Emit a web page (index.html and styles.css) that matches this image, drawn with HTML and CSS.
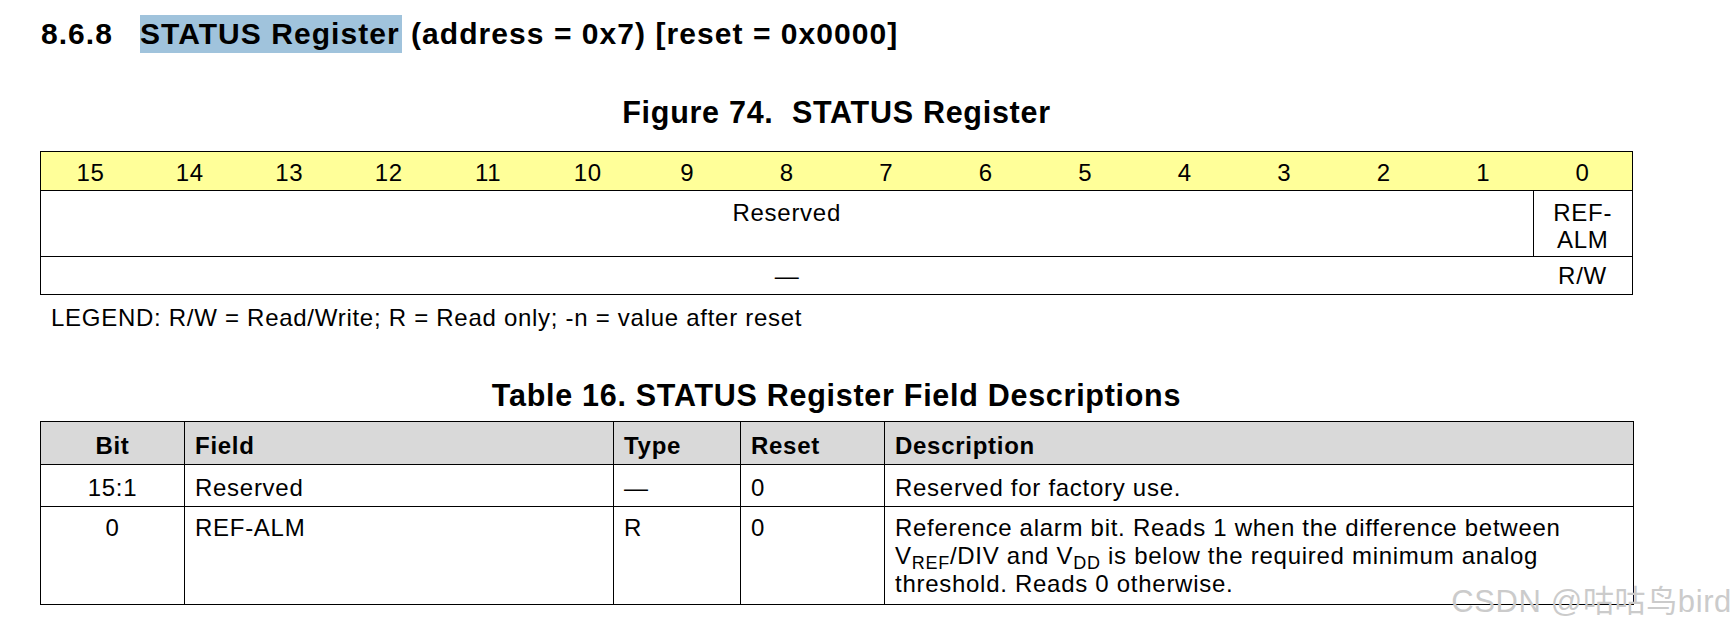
FILE: index.html
```html
<!DOCTYPE html>
<html lang="en">
<head>
<meta charset="utf-8">
<title>STATUS Register</title>
<link rel="stylesheet" href="styles.css">
</head>
<body>
<div class="page">
  <h1 class="sec-title"><span class="sec-num">8.6.8</span><span class="hl">STATUS Register</span> (address = 0x7) [reset = 0x0000]</h1>

  <div class="caption fig-caption">Figure 74.&nbsp; STATUS Register</div>
  <table class="reg">
    <colgroup>
      <col><col><col><col><col><col><col><col><col><col><col><col><col><col><col><col>
    </colgroup>
    <tr class="bits">
      <td>15</td><td>14</td><td>13</td><td>12</td><td>11</td><td>10</td><td>9</td><td>8</td>
      <td>7</td><td>6</td><td>5</td><td>4</td><td>3</td><td>2</td><td>1</td><td>0</td>
    </tr>
    <tr class="names">
      <td colspan="15" class="split">Reserved</td>
      <td>REF-<br>ALM</td>
    </tr>
    <tr class="access">
      <td colspan="15">—</td>
      <td>R/W</td>
    </tr>
  </table>
  <p class="legend">LEGEND: R/W = Read/Write; R = Read only; -n = value after reset</p>

  <div class="caption tbl-caption">Table 16. STATUS Register Field Descriptions</div>
  <table class="fields">
    <colgroup>
      <col class="c-bit"><col class="c-field"><col class="c-type"><col class="c-reset"><col class="c-desc">
    </colgroup>
    <tr class="head">
      <th class="center">Bit</th><th>Field</th><th>Type</th><th>Reset</th><th>Description</th>
    </tr>
    <tr class="r1">
      <td class="center">15:1</td><td>Reserved</td><td>—</td><td>0</td><td>Reserved for factory use.</td>
    </tr>
    <tr class="r2">
      <td class="center">0</td><td>REF-ALM</td><td>R</td><td>0</td>
      <td>Reference alarm bit. Reads 1 when the difference between<br>V<sub>REF</sub>/DIV and V<sub>DD</sub> is below the required minimum analog<br>threshold. Reads 0 otherwise.</td>
    </tr>
  </table>

  <div class="watermark">CSDN @咕咕鸟bird</div>
</div>
</body>
</html>
```

FILE: styles.css
```css
html, body {
  margin: 0;
  padding: 0;
  background: #ffffff;
}

body {
  font-family: "Liberation Sans", Arial, "Noto Sans CJK SC", sans-serif;
  color: #000000;
}

.page {
  position: relative;
  width: 1735px;
  height: 633px;
  box-sizing: border-box;
  padding-left: 40px;
  letter-spacing: 0.045em;
  overflow: hidden;
}

/* Section heading */
.sec-title {
  margin: 15px 0 0 1px;
  font-size: 30px;
  font-weight: bold;
  line-height: 38px;
  letter-spacing: 1.05px;
  white-space: nowrap;
}

.sec-num {
  display: inline-block;
  width: 99px;
}

.hl {
  display: inline-block;
  background: #a0c3dc;
  padding-right: 2px;
}

/* Captions */
.caption {
  width: 1593px;
  text-align: center;
  font-size: 30.5px;
  font-weight: bold;
  line-height: 34px;
}

.fig-caption {
  margin-top: 42px;
}

.tbl-caption {
  margin-top: 47px;
}

/* Register diagram */
.reg {
  width: 1593px;
  margin-top: 22px;
  border-collapse: collapse;
  table-layout: fixed;
  font-size: 24px;
  border: 1px solid #000;
}

.reg td {
  padding: 0;
  text-align: center;
}

.reg .bits td {
  height: 35px;
  background: #ffff99;
  border-bottom: 1px solid #000;
  vertical-align: middle;
  padding-top: 3px;
}

.reg .names td {
  height: 57px;
  line-height: 27px;
  vertical-align: top;
  padding-top: 8px;
  border-bottom: 1px solid #000;
}

.reg .names td.split {
  border-right: 1px solid #000;
}

.reg .access td {
  height: 37px;
  line-height: 26px;
  vertical-align: middle;
}

.legend {
  margin: 10px 0 0 11px;
  font-size: 24px;
  line-height: 26px;
}

/* Field description table */
.fields {
  width: 1593px;
  margin-top: 9px;
  border-collapse: collapse;
  table-layout: fixed;
  font-size: 24px;
  line-height: 28px;
}

.c-bit { width: 144px; }
.c-field { width: 429px; }
.c-type { width: 127px; }
.c-reset { width: 144px; }
.c-desc { width: 749px; }

.fields th,
.fields td {
  border: 1px solid #000;
  text-align: left;
  vertical-align: top;
  padding: 0 6px 0 10px;
}

.fields .head th {
  background: #d9d9d9;
  font-weight: bold;
  height: 32px;
  padding-top: 10px;
}

.fields .r1 td {
  height: 32px;
  padding-top: 9px;
}

.fields .r2 td {
  height: 90px;
  padding-top: 7px;
}

.fields .center {
  text-align: center;
  padding-left: 0;
  padding-right: 0;
}

.fields sub {
  font-size: 0.75em;
  line-height: 0;
  vertical-align: -0.3em;
}

/* Watermark overlay */
.watermark {
  position: absolute;
  right: 3px;
  top: 584px;
  font-size: 31px;
  line-height: 36px;
  letter-spacing: 0.02em;
  color: #cbcbcb;
  font-family: "Liberation Sans", "Noto Sans CJK SC", sans-serif;
  white-space: nowrap;
}
```
